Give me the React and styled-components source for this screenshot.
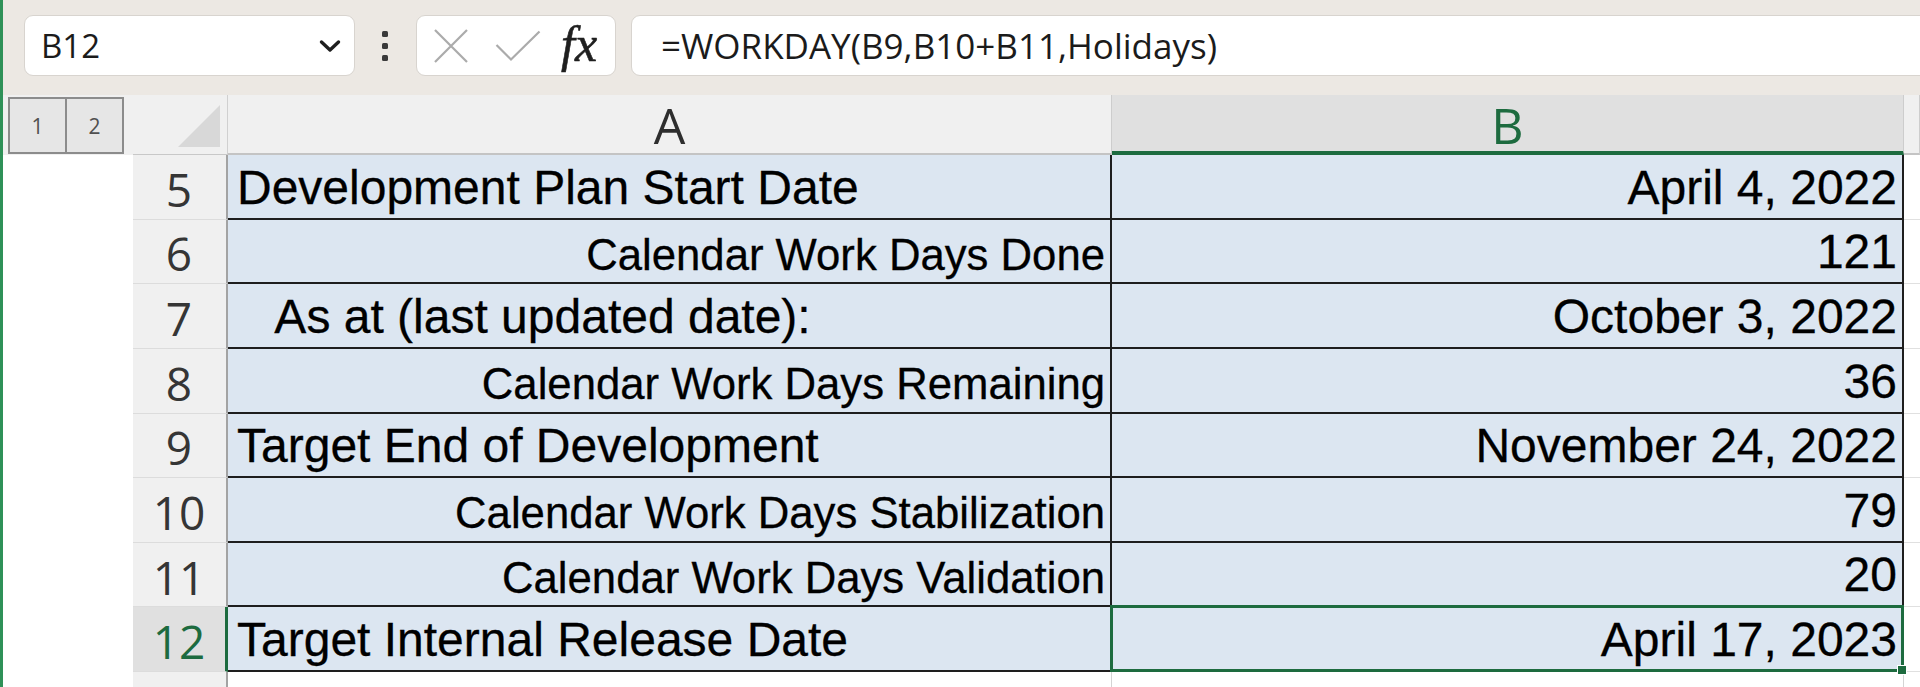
import React from 'react';
import styled, { createGlobalStyle } from 'styled-components';

const GREEN = '#1d6b3f';

const GlobalStyle = createGlobalStyle`
  html, body { margin: 0; padding: 0; background: #ffffff; overflow: hidden; }
  *, *::before, *::after { box-sizing: border-box; }
`;

const Page = styled.div`
  width: 1920px;
  height: 687px;
  overflow: hidden;
  border-left: 3px solid #2f9158;
  display: flex;
  flex-direction: column;
  background: #ffffff;
`;

const Toolbar = styled.div`
  height: 95px;
  flex: none;
  background: #ece8e3;
  display: flex;
  align-items: center;
  padding: 0 0 4px 21px;
  overflow: hidden;
  font-family: 'Open Sans', 'Noto Sans', sans-serif;
  color: #1b1b1b;
`;

const InputBox = styled.div`
  height: 61px;
  background: #ffffff;
  border: 1px solid #d8d4cf;
  border-radius: 9px;
  display: flex;
  align-items: center;
  flex: none;
`;

const NameBox = styled(InputBox)`
  width: 331px;
  padding: 0 13px 0 16px;
  justify-content: space-between;
  font-size: 33px;
`;

const Kebab = styled.div`
  display: flex;
  flex-direction: column;
  gap: 6px;
  margin: 0 28px 0 27px;
`;

const Dot = styled.span`
  width: 6px;
  height: 6px;
  border-radius: 1.5px;
  background: #3a3a3a;
`;

const FxBox = styled(InputBox)`
  width: 200px;
  padding-left: 16px;
`;

const FxLabel = styled.span`
  font-family: 'Liberation Serif', 'DejaVu Serif', serif;
  font-style: italic;
  font-size: 50px;
  color: #1f1f1f;
  margin-left: 20px;
  line-height: 1;
  margin-top: -4px;
  -webkit-text-stroke: 0.6px #1f1f1f;
`;

const FormulaBox = styled(InputBox)`
  flex: 1;
  margin-left: 15px;
  margin-right: -20px;
  padding-left: 29px;
  font-size: 35px;
`;

const Sheet = styled.div`
  display: grid;
  grid-template-columns: 130px 95px 884px 792px 1fr;
  grid-template-rows: 60px repeat(9, 64.625px);
  flex: none;
`;

const OutlineHeader = styled.div`
  background: #f0f0f0;
  display: flex;
  align-items: center;
  padding: 1px 0 0 5px;
`;

const LevelButton = styled.div`
  width: 59px;
  height: 57px;
  border: 2px solid #8c8c8c;
  margin-left: ${p => (p.$first ? '0' : '-2px')};
  background: #e6e6e6;
  display: flex;
  align-items: center;
  justify-content: center;
  font-family: 'Open Sans', 'Noto Sans', sans-serif;
  font-size: 21px;
  color: #505050;
`;

const Corner = styled.div`
  background: #f0f0f0;
  border-right: 1px solid #d0d0d0;
  border-bottom: 1px solid #c8c8c8;
  display: flex;
  justify-content: flex-end;
  align-items: flex-end;
  padding: 0 7px 7px 0;
`;

const CornerTriangle = styled.div`
  width: 0;
  height: 0;
  border-left: 42px solid transparent;
  border-bottom: 42px solid #d8d8d8;
`;

const ColHeader = styled.div`
  background: ${p => (p.$active ? '#e0e0e0' : '#f0f0f0')};
  border-right: 1px solid #cdcdcd;
  border-bottom: ${p => (p.$active ? `4px solid ${GREEN}` : '2px solid #c4c4c4')};
  display: flex;
  align-items: center;
  justify-content: center;
  padding-top: ${p => (p.$active ? '4px' : '2px')};
  font-family: 'Open Sans', 'Noto Sans', sans-serif;
  font-size: 50px;
  color: ${p => (p.$active ? GREEN : '#2e2e2e')};
`;

const OutlineCell = styled.div`
  background: #ffffff;
`;

const RowHeader = styled.div`
  background: ${p => (p.$active ? '#e0e0e0' : '#f0f0f0')};
  border-bottom: 1px solid #dcdcdc;
  border-right: ${p => (p.$active ? `3px solid ${GREEN}` : '2px solid #a3a3a3')};
  display: flex;
  align-items: center;
  justify-content: center;
  padding: 4px ${p => (p.$active ? '0' : '1px')} 0 0;
  font-family: 'Open Sans', 'Noto Sans', sans-serif;
  font-size: 46px;
  color: ${p => (p.$active ? GREEN : '#353535')};
`;

const Cell = styled.div`
  position: relative;
  background: #dce6f1;
  border-right: 2px solid #1e1e1e;
  border-bottom: 2px solid #1e1e1e;
  display: flex;
  align-items: flex-end;
  justify-content: ${p => (p.$align === 'right' ? 'flex-end' : 'flex-start')};
  padding: 0 5px 6px 9px;
  font-family: 'Liberation Sans', Arial, sans-serif;
  font-size: ${p => p.$size}px;
  line-height: 1;
  color: #000000;
  white-space: pre;
  -webkit-text-stroke: 0.3px #000;
`;

const EmptyCell = styled.div`
  background: #ffffff;
  border-right: ${p => (p.$edge ? 'none' : '1px solid #d4d4d4')};
  border-bottom: 1px solid #e0e0e0;
`;

const Selection = styled.div`
  position: absolute;
  top: -2px;
  left: -2px;
  right: -2px;
  bottom: -2px;
  border: 3px solid ${GREEN};
  z-index: 2;
  pointer-events: none;
`;

const FillHandle = styled.div`
  position: absolute;
  right: -6px;
  bottom: -6px;
  width: 10px;
  height: 10px;
  background: ${GREEN};
  border: 1px solid #ffffff;
`;

const ChevronDown = () => (
  <svg width="22" height="14" viewBox="0 0 22 14">
    <path d="M2.5 3 L11 11 L19.5 3" fill="none" stroke="#1e1e1e" strokeWidth="3.4" strokeLinecap="round" strokeLinejoin="round" />
  </svg>
);

const CancelIcon = () => (
  <svg width="36" height="36" viewBox="0 0 36 36">
    <path d="M2 2 L34 34 M34 2 L2 34" fill="none" stroke="#ababab" strokeWidth="2.2" />
  </svg>
);

const CheckIcon = () => (
  <svg width="46" height="32" viewBox="0 0 46 32" style={{ marginLeft: 26 }}>
    <path d="M1.5 15 L16 29.5 L44.5 1.5" fill="none" stroke="#ababab" strokeWidth="2.2" />
  </svg>
);

const rows = [
  { n: 5, a: 'Development Plan Start Date', align: 'left', b: 'April 4, 2022' },
  { n: 6, a: 'Calendar Work Days Done', align: 'right', b: '121' },
  { n: 7, a: '   As at (last updated date):', align: 'left', b: 'October 3, 2022' },
  { n: 8, a: 'Calendar Work Days Remaining', align: 'right', b: '36' },
  { n: 9, a: 'Target End of Development', align: 'left', b: 'November 24, 2022' },
  { n: 10, a: 'Calendar Work Days Stabilization', align: 'right', b: '79' },
  { n: 11, a: 'Calendar Work Days Validation', align: 'right', b: '20' },
  { n: 12, a: 'Target Internal Release Date', align: 'left', b: 'April 17, 2023', selected: true },
];

export default function App() {
  return (
    <>
      <GlobalStyle />
      <Page>
        <Toolbar>
          <NameBox>
            <span>B12</span>
            <ChevronDown />
          </NameBox>
          <Kebab>
            <Dot />
            <Dot />
            <Dot />
          </Kebab>
          <FxBox>
            <CancelIcon />
            <CheckIcon />
            <FxLabel>fx</FxLabel>
          </FxBox>
          <FormulaBox>=WORKDAY(B9,B10+B11,Holidays)</FormulaBox>
        </Toolbar>
        <Sheet>
          <OutlineHeader>
            <LevelButton $first>1</LevelButton>
            <LevelButton>2</LevelButton>
          </OutlineHeader>
          <Corner>
            <CornerTriangle />
          </Corner>
          <ColHeader>A</ColHeader>
          <ColHeader $active>B</ColHeader>
          <ColHeader />
          {rows.map(r => (
            <React.Fragment key={r.n}>
              <OutlineCell />
              <RowHeader $active={r.selected}>{r.n}</RowHeader>
              <Cell $align={r.align} $size={r.align === 'right' ? 43.7 : 48}>{r.a}</Cell>
              <Cell $align="right" $size={48}>
                {r.b}
                {r.selected && (
                  <Selection>
                    <FillHandle />
                  </Selection>
                )}
              </Cell>
              <EmptyCell $edge />
            </React.Fragment>
          ))}
          <OutlineCell />
          <RowHeader>13</RowHeader>
          <EmptyCell />
          <EmptyCell />
          <EmptyCell $edge />
        </Sheet>
      </Page>
    </>
  );
}
